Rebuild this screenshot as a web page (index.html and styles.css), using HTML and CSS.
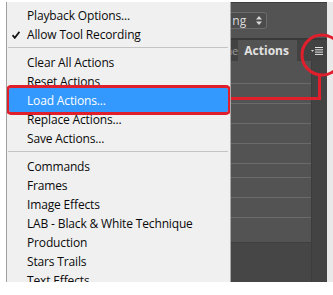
FILE: index.html
```html
<!DOCTYPE html>
<html>
<head>
    <link rel="stylesheet" href="styles.css">
  </head>
  <body>
    <div class="screen">
      <ul class="menu">
        <li class="item">Playback Options...</li>
        <li class="item">
          <svg class="check" width="8" height="8" viewBox="0 0 8 8">
            <path d="M0.5 4.2 L2.8 6.8 L7.5 0.8" fill="none" stroke="#111" stroke-width="1.8" />
          </svg>
          Allow Tool Recording
        </li>
        <li class="sep"></li>
        <li class="item">Clear All Actions</li>
        <li class="item">Reset Actions</li>
        <li class="item active">Load Actions...</li>
        <li class="item">Replace Actions...</li>
        <li class="item">Save Actions...</li>
        <li class="sep"></li>
        <li class="item">Commands</li>
        <li class="item">Frames</li>
        <li class="item">Image Effects</li>
        <li class="item">LAB - Black &amp; White Technique</li>
        <li class="item">Production</li>
        <li class="item">Stars Trails</li>
        <li class="item">Text Effects</li>
      </ul>

      <div class="panel">
        <div class="panel-top">
          <div class="select">
            <span>ng</span>
            <svg class="arrows" width="6" height="9" viewBox="0 0 6 9">
              <path d="M3 0 L6 3.5 L0 3.5 Z M3 9 L6 5.5 L0 5.5 Z" fill="#d8d8d8" />
            </svg>
          </div>
        </div>
        <div class="tabs">
          <span class="tab-cut">ne</span>
          <span class="tab">Actions</span>
          <svg class="panel-menu" width="12" height="8" viewBox="0 0 12 8">
            <path d="M0 3 L3 3 L1.5 5 Z" fill="#cfcfcf" />
            <path d="M4 0.5 H12 M4 2.8 H12 M4 5.1 H12 M4 7.4 H12" stroke="#e6e6e6" stroke-width="1" />
          </svg>
        </div>
        <div class="panel-body">
          <div class="list">
            <div class="row" style="height: 23px"></div>
            <div class="row" style="height: 20px"></div>
            <div class="row" style="height: 20px"></div>
            <div class="row" style="height: 20px"></div>
            <div class="row" style="height: 20px"></div>
            <div class="row" style="height: 14px"></div>
            <div class="row" style="height: 20px"></div>
            <div class="row" style="height: 20px"></div>
            <div class="row last" style="height: 25px"></div>
            <div class="empty"></div>
          </div>
          <div class="scroll"></div>
        </div>
      </div>
      <div class="edge"></div>
    </div>

    <svg class="callout" width="333" height="295" viewBox="0 0 333 295">
      <circle cx="322" cy="55" r="20" fill="none" stroke="#e01f2d" stroke-width="3" />
      <polyline points="231,98.5 319.5,98.5 319.5,75" fill="none" stroke="#e01f2d" stroke-width="3" />
    </svg>
  </body>
</html>
```

FILE: styles.css
```css
body {
    margin: 0;
    background-color: #ffffff;
    font-family: "Open Sans", "Noto Sans", sans-serif;
  }

  .screen {
    display: flex;
    height: 280px;
    padding: 2px 0 0 6px;
    overflow: hidden;
  }

  /* context menu */
  .menu {
    list-style-type: none;
    margin: 0;
    padding: 4px 0 0 0;
    width: 224px;
    background-color: #f0f0f0;
    border-left: 1px solid #a0a0a0;
    border-right: 1px solid #a8a8a8;
    overflow: hidden;
  }

  .item {
    display: flex;
    align-items: center;
    position: relative;
    height: 19px;
    padding-left: 20px;
    font-size: 12px;
    letter-spacing: -0.15px;
    color: #0a0a0a;
    white-space: nowrap;
  }

  .check {
    position: absolute;
    left: 5px;
    top: 6px;
  }

  .item.active {
    height: 24px;
    margin: -3px 2px -2px 2px;
    padding-left: 18px;
    background-color: #3399ff;
    color: #ffffff;
    border-radius: 2px;
    outline: 3px solid #e01f2d;
  }

  .sep {
    height: 1px;
    margin: 3px 2px 5px 1px;
    background-color: #c4c4c4;
  }

  /* photoshop actions panel */
  .panel {
    display: flex;
    flex-direction: column;
    width: 96px;
    background-color: #535353;
  }

  .panel-top {
    height: 36px;
    padding-top: 9px;
    box-sizing: border-box;
    border-top: 1px solid #3e3e3e;
  }

  .select {
    display: flex;
    align-items: center;
    justify-content: space-between;
    width: 36px;
    height: 17px;
    padding: 0 4px 0 1px;
    box-sizing: border-box;
    background-color: #4c4c4c;
    border: 1px solid #6c6c6c;
    border-left: none;
    border-radius: 0 3px 3px 0;
    font-size: 12px;
    color: #dcdcdc;
  }

  .tabs {
    display: flex;
    align-items: center;
    height: 21px;
    background-color: #424242;
    border-top: 2px solid #393939;
  }

  .tab-cut {
    width: 7px;
    overflow: hidden;
    font-size: 11px;
    color: #9a9a9a;
    direction: rtl;
  }

  .tab {
    display: flex;
    align-items: center;
    height: 100%;
    padding: 0 8px 0 6px;
    background-color: #535353;
    font-size: 12px;
    font-weight: bold;
    color: #e2e2e2;
  }

  .panel-menu {
    margin-left: auto;
    margin-right: 4px;
  }

  .panel-body {
    display: flex;
    flex: 1;
  }

  .list {
    display: flex;
    flex-direction: column;
    flex: 1;
  }

  .row {
    border-bottom: 1px solid #6a6a6a;
    box-sizing: border-box;
  }

  .row.last {
    border-bottom: 1px solid #3f3f3f;
  }

  .empty {
    flex: 1;
    background-color: #464646;
  }

  .scroll {
    width: 15px;
    background-color: #434343;
    border-left: 1px solid #3c3c3c;
  }

  .edge {
    width: 6px;
    background-color: #e9e9e9;
  }

  .callout {
    position: absolute;
    left: 0;
    top: 0;
    pointer-events: none;
  }
```
